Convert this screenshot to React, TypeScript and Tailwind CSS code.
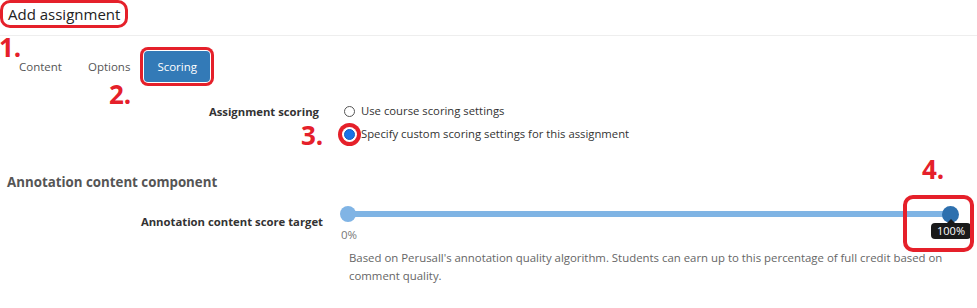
import React from 'react';

const Mark: React.FC<{ label: string; className: string }> = ({ label, className }) => (
  <span
    className={`absolute text-[26px] font-bold leading-none text-[#e5202a] ${className}`}
    style={{ fontFamily: '"Open Sans", sans-serif' }}
  >
    {label}
  </span>
);

const App: React.FC = () => {
  return (
    <div
      className="relative w-[977px] h-[308px] bg-white overflow-hidden text-[#333]"
      style={{ fontFamily: '"Open Sans", "Noto Sans", sans-serif' }}
    >
      {/* header */}
      <div className="h-[36px] border-b border-[#eee]">
        <div className="inline-flex items-center h-[28px] px-[5px] border-[3px] border-[#e5202a] rounded-[10px]">
          <h1 className="text-[15px] leading-none text-[#222]">Add assignment</h1>
        </div>
      </div>
      <Mark label="1." className="left-[-1px] top-[34px]" />

      {/* tabs */}
      <div className="flex items-center pl-[7px] mt-[15px] h-[31px] text-[11.5px]">
        <button className="px-[12px] h-[31px] text-[#555]">Content</button>
        <button className="ml-[2px] px-[12px] h-[31px] text-[#555]">Options</button>
        <button className="ml-[2px] px-[13px] h-[31px] rounded-[4px] bg-[#337ab7] text-white ring-[3px] ring-[#e5202a] ring-offset-[1px]">
          Scoring
        </button>
      </div>
      <Mark label="2." className="left-[109px] top-[81px]" />

      {/* scoring radio */}
      <div className="flex mt-[18px] text-[11.3px]">
        <div className="w-[319px] text-right font-bold leading-[23px]">Assignment scoring</div>
        <div className="pl-[25px] flex flex-col">
          <label className="flex items-center gap-[6px] h-[23px]">
            <span className="w-[11px] h-[11px] rounded-full border border-[#555] bg-white" />
            <span>Use course scoring settings</span>
          </label>
          <label className="flex items-center gap-[6px] h-[23px]">
            <span className="w-[11px] h-[11px] rounded-full bg-[#1a73e8] border border-[#1660c0] ring-[2px] ring-white shadow-[0_0_0_6px_#e5202a]" />
            <span>Specify custom scoring settings for this assignment</span>
          </label>
        </div>
      </div>
      <Mark label="3." className="left-[301px] top-[122px]" />

      {/* section */}
      <h2 className="mt-[26px] pl-[7px] text-[13.3px] font-bold text-[#555] leading-[20px]">
        Annotation content component
      </h2>

      <div className="flex mt-[13px]">
        <div className="w-[323px] text-right text-[11.3px] font-bold pt-[8px] leading-[18px]">
          Annotation content score target
        </div>
        <div className="ml-[17px] w-[619px] flex flex-col">
          <div className="relative h-[18px] flex items-center">
            <div className="mx-[8px] h-[6px] flex-1 bg-[#7fb4e4] rounded-full" />
            <span className="absolute left-0 w-[16px] h-[16px] rounded-full bg-[#80b4e5]" />
            <span className="absolute right-0 w-[17px] h-[17px] rounded-full bg-[#2e70ae]" />
          </div>
          <div className="relative flex justify-between text-[11.5px] text-[#777] pl-[1px] mt-[4px] leading-[16px]">
            <span>0%</span>
            <span className="mr-[-8px] -mt-[4px]">100%</span>
            <div className="absolute right-[-12px] top-[-8px] flex flex-col items-center">
              <span className="w-0 h-0 border-x-[4px] border-x-transparent border-b-[4px] border-b-[#1a1a1a]" />
              <span className="px-[6px] h-[16px] rounded-[4px] bg-[#1a1a1a] text-white text-[11px] leading-[16px]">100%</span>
            </div>
          </div>
          <p className="mt-[6px] pl-[9px] pr-[16px] text-[11.4px] text-[#666] leading-[18px]">
            Based on Perusall's annotation quality algorithm. Students can earn up to this percentage of full credit based on comment quality.
          </p>
        </div>
      </div>

      {/* annotation box over slider end */}
      <div className="absolute left-[903px] top-[195px] w-[71px] h-[57px] border-[4px] border-[#e5202a] rounded-[10px]" />
      <Mark label="4." className="left-[922px] top-[156px]" />
    </div>
  );
};

export default App;
